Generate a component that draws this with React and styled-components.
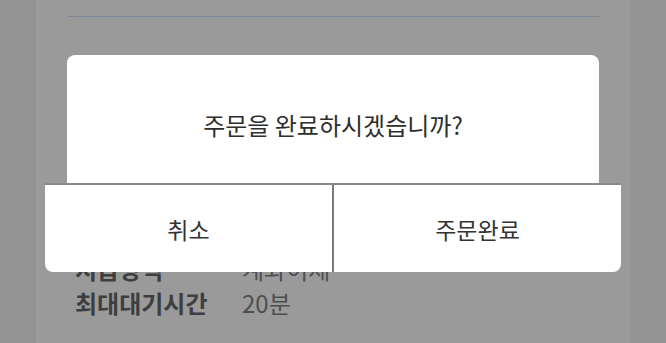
import React from 'react';
import styled, { createGlobalStyle } from 'styled-components';

const GlobalStyle = createGlobalStyle`
    * { box-sizing: border-box; }
    body {
        margin: 0;
        background: #939393;
        font-family: "Noto Sans CJK KR", "Noto Sans", sans-serif;
    }
`;

const orderInfo = [
    { label: '지급방식', value: '계좌이체' },
    { label: '최대대기시간', value: '20분' },
];

const App = () => {
    return (
        <>
            <GlobalStyle />
            <Screen>
                <Page>
                    <Divider />
                    <InfoList>
                        {orderInfo.map((row) => (
                            <InfoRow key={row.label}>
                                <InfoLabel>{row.label}</InfoLabel>
                                <InfoValue>{row.value}</InfoValue>
                            </InfoRow>
                        ))}
                    </InfoList>
                </Page>
                <Dialog>
                    <MessageBox>
                        <p>주문을 완료하시겠습니까?</p>
                    </MessageBox>
                    <ButtonRow>
                        <DialogButton>취소</DialogButton>
                        <DialogButton primary>주문완료</DialogButton>
                    </ButtonRow>
                </Dialog>
            </Screen>
        </>
    );
};

export default App;

const Screen = styled.div`
    position: relative;
    width: 666px;
    height: 343px;
    overflow: hidden;
`;
const Page = styled.div`
    width: 594px;
    height: 343px;
    margin: 0 auto;
    padding: 16px 30px 0 32px;
    background: #9a9a9a;
`;
const Divider = styled.div`
    height: 1px;
    background: #7b8795;
`;
const InfoList = styled.div`
    display: flex;
    flex-direction: column;
    margin-top: 234px;
    padding-left: 7px;
`;
const InfoRow = styled.div`
    display: flex;
    align-items: center;
    height: 34px;
    font-size: 24px;
`;
const InfoLabel = styled.span`
    width: 167px;
    font-weight: bold;
    color: #3e3e3e;
`;
const InfoValue = styled.span`
    color: #4e4e4e;
`;
const Dialog = styled.div`
    position: absolute;
    top: 55px;
    left: 45px;
    width: 576px;
    display: flex;
    flex-direction: column;
    align-items: center;
`;
const MessageBox = styled.div`
    display: flex;
    justify-content: center;
    align-items: center;
    width: 532px;
    height: 128px;
    padding-top: 11px;
    background: #fff;
    border-radius: 8px 8px 0 0;
    p {
        margin: 0;
        font-size: 24px;
        color: #2e2e2e;
    }
`;
const ButtonRow = styled.div`
    display: flex;
    width: 100%;
    height: 89px;
    background: #fff;
    border-top: 2px solid #8a8a8a;
    border-radius: 0 0 8px 8px;
    overflow: hidden;
`;
const DialogButton = styled.div`
    flex: 1;
    display: flex;
    justify-content: center;
    align-items: center;
    font-size: 23px;
    color: #333;
    border-left: ${props => props.primary ? '2px solid #7a7a7a' : 'none'};
`;
